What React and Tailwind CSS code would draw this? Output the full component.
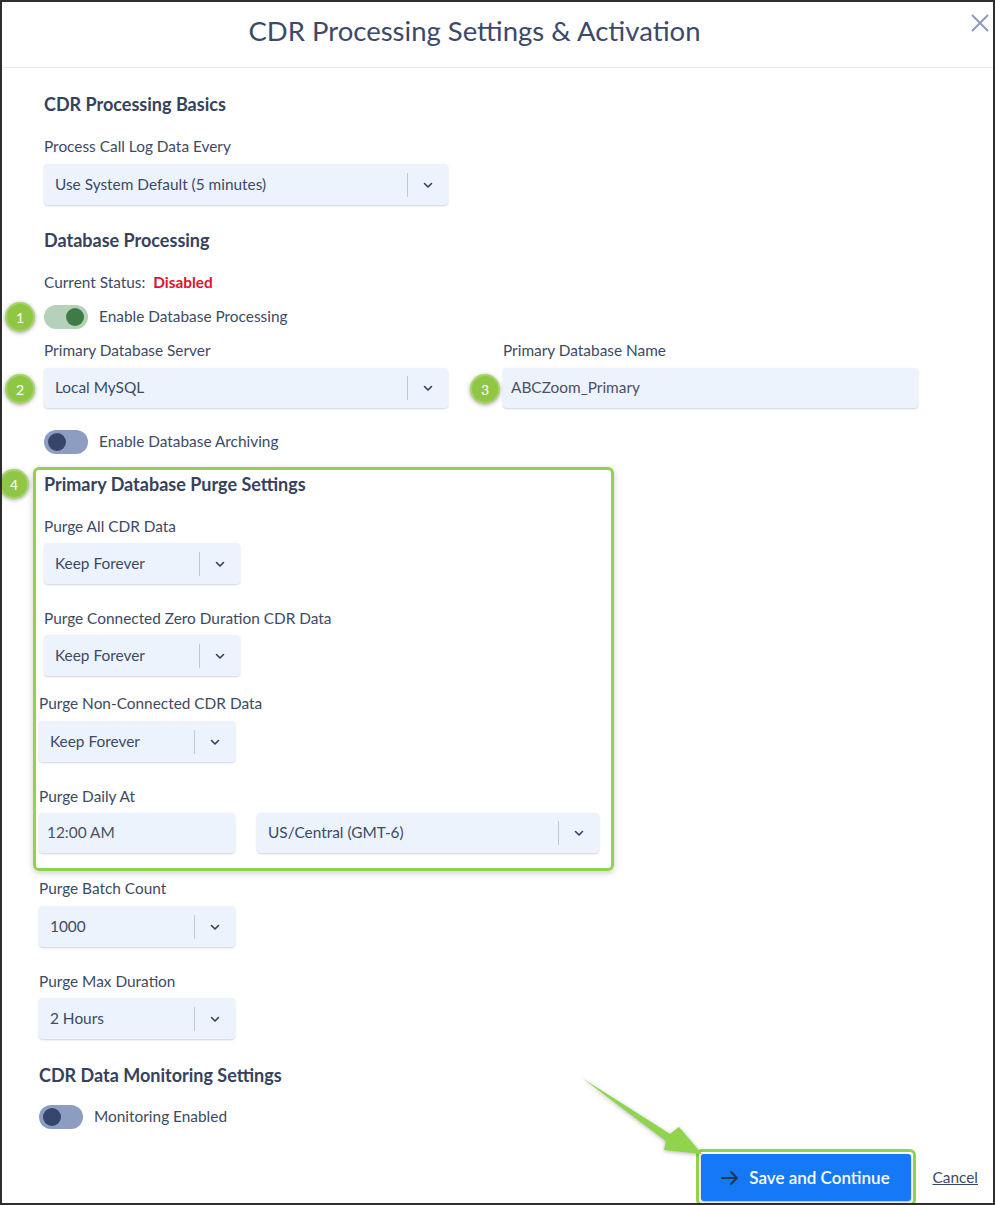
import React from 'react';

const ink = 'text-[#3d4a64]';

const Chevron = () => (
    <svg width="12" height="12" viewBox="0 0 12 12" fill="none">
        <path d="M2.5 4.5 L6 8 L9.5 4.5" stroke="#34405a" strokeWidth="1.6" strokeLinecap="round" strokeLinejoin="round" />
    </svg>
);

const Select = ({ value, width, height = 'h-[41px]' }) => (
    <div className={`${width} ${height} flex items-center bg-[#ecf3fd] rounded-[4px] shadow-[0_1px_2px_rgba(40,50,70,0.22)]`}>
        <span className={`flex-1 pl-[11px] text-[15.4px] ${ink}`}>{value}</span>
        <span className="w-px h-[24px] bg-[#c3c9d3]" />
        <span className="w-[40px] flex justify-center"><Chevron /></span>
    </div>
);

const Input = ({ value, width }) => (
    <div className={`${width} h-[40px] flex items-center bg-[#ecf3fd] rounded-[4px] shadow-[0_1px_2px_rgba(40,50,70,0.22)] pl-[8px] text-[15.4px] text-[#4a5263]`}>
        {value}
    </div>
);

const Label = ({ children, className = '' }) => (
    <div className={`text-[15.4px] leading-[20px] ${ink} ${className}`}>{children}</div>
);

const Heading = ({ children, className = '' }) => (
    <div className={`text-[18px] leading-[24px] font-bold text-[#36425c] ${className}`}>{children}</div>
);

const Toggle = ({ on, label, className = '' }) => (
    <div className={`flex items-center gap-[11px] ${className}`}>
        <div className={`w-[44px] h-[24px] rounded-full flex items-center px-[4px] ${on ? 'bg-[#b6d1b9] justify-end' : 'bg-[#8d9dc1] justify-start'}`}>
            <div className={`w-[18px] h-[18px] rounded-full ${on ? 'bg-[#3f7b46]' : 'bg-[#36466a]'}`} />
        </div>
        <span className={`text-[15.4px] ${ink}`}>{label}</span>
    </div>
);

const Badge = ({ n, className }) => (
    <div className={`absolute w-[30px] h-[30px] rounded-full bg-[#8fc744] border-2 border-[#a6d36a] shadow-[0_1px_4px_rgba(0,0,0,0.35)] flex items-center justify-center text-white text-[14px] ${className}`}>
        {n}
    </div>
);

export default function App() {
    return (
        <div className="relative w-[995px] h-[1205px] bg-white border-2 border-[#2e2e2e] overflow-hidden" style={{ fontFamily: 'Lato, "Liberation Sans", sans-serif' }}>
            {/* header */}
            <div className="h-[66px] flex items-center justify-center pb-[7px] pr-[46px] border-b border-[#e2e8f1]">
                <h1 className="text-[27.5px] text-[#3b4a6b]">CDR Processing Settings &amp; Activation</h1>
            </div>
            <svg className="absolute top-[12px] right-[4px]" width="18" height="18" viewBox="0 0 18 18">
                <path d="M1 1 L17 17 M17 1 L1 17" stroke="#8c9bbd" strokeWidth="2" />
            </svg>

            <div className="pl-[42px]">
                <Heading className="mt-[24px]">CDR Processing Basics</Heading>
                <Label className="mt-[20px]">Process Call Log Data Every</Label>
                <div className="mt-[8px]"><Select value="Use System Default (5 minutes)" width="w-[404px]" /></div>

                <Heading className="mt-[23px]">Database Processing</Heading>
                <div className={`mt-[20px] text-[15.4px] leading-[20px] ${ink}`}>
                    Current Status:&nbsp; <span className="font-bold text-[#e0122d]">Disabled</span>
                </div>
                <Toggle on label="Enable Database Processing" className="mt-[13px]" />

                <div className="mt-[11px] flex gap-[55px]">
                    <div className="w-[404px]">
                        <Label>Primary Database Server</Label>
                        <div className="mt-[8px]"><Select value="Local MySQL" width="w-[404px]" height="h-[40px]" /></div>
                    </div>
                    <div className="w-[415px]">
                        <Label>Primary Database Name</Label>
                        <div className="mt-[8px]"><Input value="ABCZoom_Primary" width="w-[415px]" /></div>
                    </div>
                </div>

                <Toggle label="Enable Database Archiving" className="mt-[22px]" />

                <div className="mt-[13px] -ml-[11px] w-[581px] border-[3px] border-[#8fd44a] rounded-[6px] shadow-[0_2px_6px_rgba(0,0,0,0.2)] pl-[8px] pt-[2px] pb-[15px]">
                    <Heading>Primary Database Purge Settings</Heading>
                    <Label className="mt-[20px]">Purge All CDR Data</Label>
                    <div className="mt-[7px]"><Select value="Keep Forever" width="w-[196px]" /></div>
                    <Label className="mt-[24px]">Purge Connected Zero Duration CDR Data</Label>
                    <div className="mt-[7px]"><Select value="Keep Forever" width="w-[196px]" /></div>
                    <div className="-ml-[5px]">
                        <Label className="mt-[17px]">Purge Non-Connected CDR Data</Label>
                        <div className="mt-[8px]"><Select value="Keep Forever" width="w-[196px]" /></div>
                        <Label className="mt-[24px]">Purge Daily At</Label>
                        <div className="mt-[7px] flex gap-[22px]">
                            <Input value="12:00 AM" width="w-[196px]" />
                            <Select value="US/Central (GMT-6)" width="w-[342px]" height="h-[40px]" />
                        </div>
                    </div>
                </div>

                <div className="-ml-[5px]">
                    <Label className="mt-[7px]">Purge Batch Count</Label>
                    <div className="mt-[8px]"><Select value="1000" width="w-[196px]" /></div>
                    <Label className="mt-[24px]">Purge Max Duration</Label>
                    <div className="mt-[7px]"><Select value="2 Hours" width="w-[196px]" /></div>
                    <Heading className="mt-[24px]">CDR Data Monitoring Settings</Heading>
                    <Toggle label="Monitoring Enabled" className="mt-[18px]" />
                </div>
            </div>

            <div className="mt-[20px] flex items-center justify-end pr-[15px] gap-[17px]">
                <div className="border-[3px] border-[#8fd44a] rounded-[6px] p-[2px]">
                    <button className="w-[210px] h-[47px] bg-[#1478f7] rounded-[3px] flex items-center justify-center gap-[10px] text-white text-[17px] font-semibold shadow-[0_1px_3px_rgba(0,0,0,0.3)]">
                        <svg width="18" height="16" viewBox="0 0 18 16" fill="none">
                            <path d="M1 8 H16 M10 2 L16 8 L10 14" stroke="#2a3650" strokeWidth="2" strokeLinecap="round" strokeLinejoin="round" />
                        </svg>
                        Save and Continue
                    </button>
                </div>
                <span className={`text-[15.4px] underline ${ink}`}>Cancel</span>
            </div>

            {/* annotations */}
            <Badge n="1" className="left-[3px] top-[300px]" />
            <Badge n="2" className="left-[3px] top-[372px]" />
            <Badge n="3" className="left-[468px] top-[372px]" />
            <Badge n="4" className="-left-[3px] top-[467px] w-[28px] h-[28px]" />

            <svg className="absolute left-0 top-0 pointer-events-none" width="995" height="1205">
                <polygon
                    points="580,1076 668,1132 677,1125 700,1152 662,1148 664,1139"
                    fill="#8fd44a"
                    style={{ filter: 'drop-shadow(0 1px 2px rgba(0,0,0,0.3))' }}
                />
            </svg>
        </div>
    );
}
